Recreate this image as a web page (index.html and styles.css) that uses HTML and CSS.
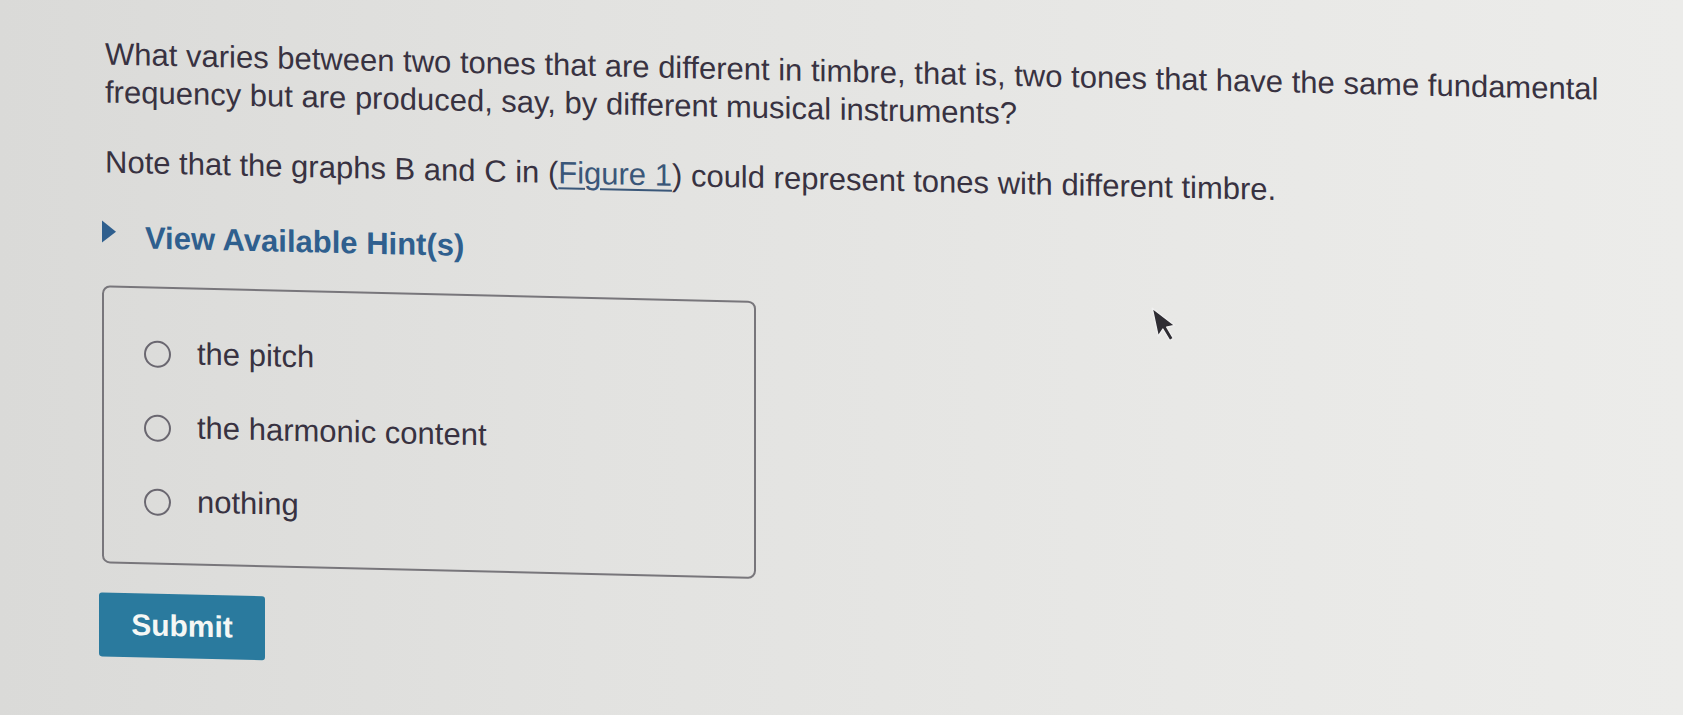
FILE: index.html
```html
<!DOCTYPE html>
<html lang="en">
<head>
<meta charset="utf-8">
<title>Timbre question</title>
<link rel="stylesheet" href="styles.css">
</head>
<body>
<div class="page">
  <p class="q">What varies between two tones that are different in timbre, that is, two tones that have the same fundamental frequency but are produced, say, by different musical instruments?</p>
  <p class="q note">Note that the graphs B and C in (<a class="link" href="#">Figure 1</a>) could represent tones with different timbre.</p>
  <div class="hint"><span class="tri"></span><span class="hint-text">View Available Hint(s)</span></div>
  <div class="choices">
    <label class="choice"><span class="radio"></span><span class="label">the pitch</span></label>
    <label class="choice"><span class="radio"></span><span class="label">the harmonic content</span></label>
    <label class="choice"><span class="radio"></span><span class="label">nothing</span></label>
  </div>
  <button class="submit" type="button">Submit</button>
</div>
<svg class="cursor" width="22" height="40" viewBox="0 0 20 36" aria-hidden="true">
  <path d="M2 1 L2 27 L7.5 21.5 L11.5 33 L15 31.6 L11.2 20.4 L18.5 20.4 Z" fill="#2f2d33" stroke="#f0f0f0" stroke-width="1.2" stroke-linejoin="round"/>
</svg>
</body>
</html>
```
FILE: styles.css
```css
html, body {
  margin: 0;
  padding: 0;
}
body {
  width: 1683px;
  height: 715px;
  overflow: hidden;
  position: relative;
  background: linear-gradient(90deg, #dadad8 0%, #e2e2e0 35%, #e8e8e6 70%, #ececea 100%);
  font-family: "Liberation Sans", Arial, Helvetica, sans-serif;
  color: #383241;
}
.page {
  padding: 33px 40px 0 102px;
  transform: skewY(1.35deg);
  transform-origin: 0 0;
}
.q {
  margin: 0 0 0 3px;
  font-size: 31px;
  line-height: 38px;
}
.note {
  margin-top: 32px;
}
.link {
  color: #3a5779;
  text-decoration: underline;
  text-decoration-thickness: 2px;
  text-underline-offset: 4px;
}
.hint {
  display: flex;
  align-items: center;
  height: 38px;
  margin-top: 37px;
  font-size: 31px;
  line-height: 38px;
  font-weight: 700;
  color: #2f5f8e;
}
.tri {
  width: 0;
  height: 0;
  border-left: 14px solid #2f5f8e;
  border-top: 11px solid transparent;
  border-bottom: 11px solid transparent;
  margin-right: 29px;
  margin-bottom: 12px;
  flex: none;
}
.choices {
  box-sizing: border-box;
  width: 654px;
  height: 278px;
  margin-top: 29px;
  border: 2px solid #78767b;
  border-radius: 8px;
  padding: 46px 0 0 40px;
  display: flex;
  flex-direction: column;
  gap: 36px;
}
.choice {
  display: flex;
  align-items: center;
  height: 38px;
  font-size: 31px;
  line-height: 38px;
}
.radio {
  box-sizing: border-box;
  width: 27px;
  height: 27px;
  border: 2px solid #6a6770;
  border-radius: 50%;
  margin-right: 26px;
  flex: none;
}
.submit {
  display: flex;
  align-items: center;
  justify-content: center;
  margin: 29px 0 0 -3px;
  width: 166px;
  height: 64px;
  padding: 0;
  border: 0;
  border-radius: 3px;
  background: #2a7a9e;
  color: #f5f7f5;
  font-family: "Liberation Sans", Arial, Helvetica, sans-serif;
  font-size: 30px;
  font-weight: 700;
}
.cursor {
  position: absolute;
  left: 1150px;
  top: 307px;
  transform: rotate(-12deg);
  transform-origin: 2px 1px;
}
```
